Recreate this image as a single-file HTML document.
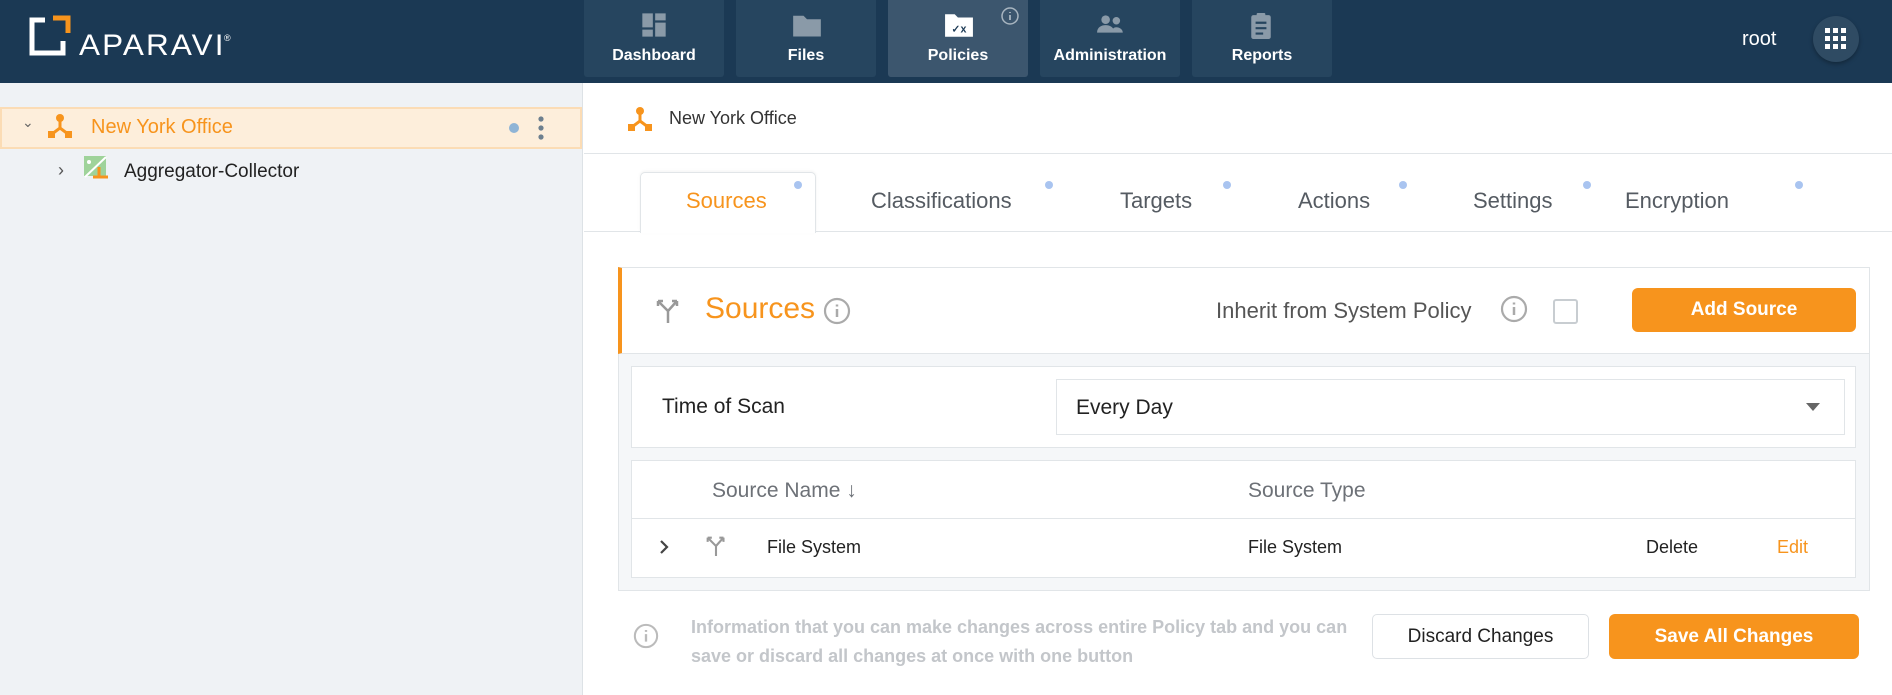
<!DOCTYPE html>
<html><head><meta charset="utf-8"><style>
*{box-sizing:border-box;margin:0;padding:0}
body{width:1892px;height:695px;overflow:hidden;font-family:"Liberation Sans",sans-serif;background:#fff;position:relative}
.abs{position:absolute}
.hdr{left:0;top:0;width:1892px;height:83px;background:#1b3954}
.nav{top:0;width:140px;height:77px;background:#26455f;color:#fff;font-size:16px;font-weight:bold;text-align:center;border-radius:0 0 3px 3px}
.nav span{position:absolute;left:0;right:0;top:47px}
.nav svg{position:absolute;left:56px;top:11px}
.side{left:0;top:83px;width:583px;height:612px;background:#eff2f5;border-right:1px solid #dde2e6}
.t{position:absolute;white-space:nowrap}
.tab{font-size:22px;color:#555b62;top:188px}
.dot{width:8px;height:8px;border-radius:50%;background:#a9c4f0;top:181px}
</style></head><body>
<div class="abs hdr"></div>
<!-- logo -->
<svg class="abs" style="left:29px;top:15px" width="44" height="42" viewBox="0 0 44 42"><path d="M16 5 H3 V38 H34 V26" stroke="#fff" stroke-width="5" fill="none"/><path d="M24 3 H39 V18" stroke="#f7941d" stroke-width="5" fill="none"/></svg>
<div class="t" style="left:79px;top:29px;font-size:30px;color:#fff;letter-spacing:2px;transform:scaleX(1.05);transform-origin:left">APARAVI</div>
<div class="t" style="left:224px;top:33px;font-size:9px;color:#fff">®</div>
<div class="abs nav" style="left:584px"><svg width="28" height="28" viewBox="0 0 24 24"><path fill="#8a9aa8" d="M2 2h9v12H2zM13 2h9v6h-9zM13 10h9v12h-9zM2 16h9v6H2z"/></svg><span>Dashboard</span></div>
<div class="abs nav" style="left:736px"><svg width="30" height="28" viewBox="0 0 26 24"><path fill="#8a9aa8" d="M1 4h9l3 3h12v15H1z"/></svg><span>Files</span></div>
<div class="abs nav" style="left:888px;background:#3c566e"><svg width="30" height="28" viewBox="0 0 28 24"><path fill="#fff" d="M1 2h9l3 3h14v18H1z"/><text x="7" y="19" font-size="10" font-weight="bold" fill="#1b3954" font-family="Liberation Sans">✓x</text></svg><span>Policies</span>
<svg style="left:112px;top:6px" width="20" height="20" viewBox="0 0 20 20"><circle cx="10" cy="10" r="8" stroke="#a8b5c0" stroke-width="1.5" fill="none"/><path d="M10 9v5M10 6v1" stroke="#a8b5c0" stroke-width="1.8"/></svg></div>
<div class="abs nav" style="left:1040px"><svg width="30" height="26" viewBox="0 0 28 24"><circle cx="9" cy="8" r="4" fill="#8a9aa8"/><circle cx="19" cy="9" r="3.5" fill="#8a9aa8"/><path fill="#8a9aa8" d="M1 20c0-5 4-7 8-7s8 2 8 7zM15 20c0-3 1-5 4-5s6 2 6 5z"/></svg><span>Administration</span></div>
<div class="abs nav" style="left:1192px"><svg width="26" height="30" viewBox="0 0 24 26"><rect x="3" y="3" width="18" height="22" rx="2" fill="#8a9aa8"/><rect x="8" y="1" width="8" height="4" rx="1" fill="#8a9aa8"/><path d="M7 10h10M7 15h10M7 20h7" stroke="#26455f" stroke-width="2"/></svg><span>Reports</span></div>
<div class="t" style="left:1742px;top:28px;font-size:20px;color:#fff">root</div>
<div class="abs" style="left:1813px;top:16px;width:46px;height:46px;border-radius:50%;background:#2f4b63;box-shadow:0 2px 4px rgba(0,0,0,.3)"></div>
<svg class="abs" style="left:1825px;top:28px" width="22" height="22" viewBox="0 0 22 22" fill="#fff"><rect x="0" y="0" width="5" height="5"/><rect x="8" y="0" width="5" height="5"/><rect x="16" y="0" width="5" height="5"/><rect x="0" y="8" width="5" height="5"/><rect x="8" y="8" width="5" height="5"/><rect x="16" y="8" width="5" height="5"/><rect x="0" y="16" width="5" height="5"/><rect x="8" y="16" width="5" height="5"/><rect x="16" y="16" width="5" height="5"/></svg>
<!-- sidebar -->
<div class="abs side"></div>
<div class="abs" style="left:0;top:107px;width:582px;height:42px;background:#fdeedb;border:2px solid #fbdcb5"></div>
<div class="t" style="left:22px;top:114px;font-size:14px;color:#666">⌄</div>
<svg class="abs" style="left:48px;top:113px" width="24" height="26" viewBox="0 0 24 26"><circle cx="12" cy="5" r="4" fill="#f7941d"/><path d="M12 8v7L4 21M12 15l8 6" stroke="#f7941d" stroke-width="3" fill="none"/><rect x="0" y="18" width="7" height="7" fill="#f7941d"/><rect x="17" y="18" width="7" height="7" fill="#f7941d"/></svg>
<div class="t" style="left:91px;top:116px;font-size:20px;color:#f7941d">New York Office</div>
<div class="abs" style="left:509px;top:123px;width:10px;height:10px;border-radius:50%;background:#8fb4d6"></div>
<svg class="abs" style="left:538px;top:116px" width="6" height="24"><circle cx="3" cy="3" r="2.6" fill="#6d7f8e"/><circle cx="3" cy="12" r="2.6" fill="#6d7f8e"/><circle cx="3" cy="21" r="2.6" fill="#6d7f8e"/></svg>
<div class="t" style="left:58px;top:160px;font-size:18px;color:#555">›</div>
<svg class="abs" style="left:83px;top:155px" width="26" height="24" viewBox="0 0 26 24"><rect x="1" y="1" width="22" height="20" fill="#9fd39a"/><path d="M2 22L23 2" stroke="#fff" stroke-width="2"/><path d="M10 22h15M16 12v10" stroke="#f7941d" stroke-width="3"/><circle cx="6" cy="7" r="2" fill="#fff"/></svg>
<div class="t" style="left:124px;top:161px;font-size:19px;color:#222">Aggregator-Collector</div>
<!-- breadcrumb -->
<svg class="abs" style="left:628px;top:106px" width="24" height="26" viewBox="0 0 24 26"><circle cx="12" cy="5" r="4" fill="#f7941d"/><path d="M12 8v7L4 21M12 15l8 6" stroke="#f7941d" stroke-width="3" fill="none"/><rect x="0" y="18" width="7" height="7" fill="#f7941d"/><rect x="17" y="18" width="7" height="7" fill="#f7941d"/></svg>
<div class="t" style="left:669px;top:108px;font-size:18px;color:#333">New York Office</div>
<div class="abs" style="left:584px;top:153px;width:1308px;height:1px;background:#e1e5e8"></div>
<!-- tabs -->
<div class="abs" style="left:584px;top:231px;width:1308px;height:1px;background:#e1e5e8"></div>
<div class="abs" style="left:640px;top:172px;width:176px;height:61px;background:#fff;border:1px solid #e1e5e8;border-bottom:none;border-radius:5px 5px 0 0;box-shadow:0 -1px 3px rgba(0,0,0,.05)"></div>
<div class="t tab" style="left:686px;color:#f7941d">Sources</div>
<div class="t tab" style="left:871px">Classifications</div>
<div class="t tab" style="left:1120px">Targets</div>
<div class="t tab" style="left:1298px">Actions</div>
<div class="t tab" style="left:1473px">Settings</div>
<div class="t tab" style="left:1625px">Encryption</div>
<div class="abs dot" style="left:794px"></div><div class="abs dot" style="left:1045px"></div><div class="abs dot" style="left:1223px"></div><div class="abs dot" style="left:1399px"></div><div class="abs dot" style="left:1583px"></div><div class="abs dot" style="left:1795px"></div>
<!-- panel -->
<div class="abs" style="left:618px;top:267px;width:1252px;height:324px;background:#f5f7f9;border:1px solid #e1e5e8"></div>
<div class="abs" style="left:618px;top:267px;width:1252px;height:87px;background:#fff;border:1px solid #e1e5e8;border-left:4px solid #f7941d"></div>
<svg class="abs" style="left:656px;top:298px" width="24" height="26" viewBox="0 0 24 26" stroke="#999" stroke-width="2.5" fill="none"><path d="M12 25V13L3 4M12 13l8-9M2 3v5M2 3h5M21 3v5M21 3h-5"/></svg>
<div class="t" style="left:705px;top:292px;font-size:30px;color:#f7941d">Sources</div>
<svg class="abs" style="left:823px;top:297px" width="28" height="28" viewBox="0 0 28 28"><circle cx="14" cy="14" r="12" stroke="#aaa" stroke-width="2.2" fill="none"/><path d="M14 12v8M14 7.5v2" stroke="#aaa" stroke-width="2.5"/></svg>
<div class="t" style="left:1216px;top:298px;font-size:22px;color:#555">Inherit from System Policy</div>
<svg class="abs" style="left:1500px;top:295px" width="28" height="28" viewBox="0 0 28 28"><circle cx="14" cy="14" r="12" stroke="#aaa" stroke-width="2.2" fill="none"/><path d="M14 12v8M14 7.5v2" stroke="#aaa" stroke-width="2.5"/></svg>
<div class="abs" style="left:1553px;top:299px;width:25px;height:25px;border:2px solid #c8cdd1;border-radius:3px"></div>
<div class="abs" style="left:1632px;top:288px;width:224px;height:44px;background:#f7941d;border-radius:6px;color:#fff;font-weight:bold;font-size:19px;text-align:center;line-height:44px">Add Source</div>
<div class="abs" style="left:631px;top:366px;width:1225px;height:82px;background:#fff;border:1px solid #e1e5e8"></div>
<div class="t" style="left:662px;top:395px;font-size:21px;color:#222">Time of Scan</div>
<div class="abs" style="left:1056px;top:379px;width:789px;height:56px;border:1px solid #e1e5e8"></div>
<div class="t" style="left:1076px;top:396px;font-size:21px;color:#222">Every Day</div>
<svg class="abs" style="left:1806px;top:403px" width="14" height="8"><path d="M0 0h14L7 8z" fill="#666"/></svg>
<div class="abs" style="left:631px;top:460px;width:1225px;height:118px;background:#fff;border:1px solid #e1e5e8"></div>
<div class="abs" style="left:631px;top:518px;width:1225px;height:1px;background:#e1e5e8"></div>
<div class="t" style="left:712px;top:479px;font-size:21px;color:#6d7177">Source Name ↓</div>
<div class="t" style="left:1248px;top:479px;font-size:21px;color:#6d7177">Source Type</div>
<svg class="abs" style="left:659px;top:539px" width="10" height="16"><path d="M2 2l6 6-6 6" stroke="#444" stroke-width="2.2" fill="none"/></svg>
<svg class="abs" style="left:706px;top:534px" width="20" height="24" viewBox="0 0 24 26" stroke="#999" stroke-width="2.5" fill="none"><path d="M12 25V13L3 4M12 13l8-9M2 3v5M2 3h5M21 3v5M21 3h-5"/></svg>
<div class="t" style="left:767px;top:537px;font-size:18px;color:#222">File System</div>
<div class="t" style="left:1248px;top:537px;font-size:18px;color:#222">File System</div>
<div class="t" style="left:1646px;top:537px;font-size:18px;color:#222">Delete</div>
<div class="t" style="left:1777px;top:537px;font-size:18px;color:#f7941d">Edit</div>
<!-- footer -->
<svg class="abs" style="left:633px;top:623px" width="26" height="26" viewBox="0 0 28 28"><circle cx="14" cy="14" r="12" stroke="#bbb" stroke-width="2.2" fill="none"/><path d="M14 12v8M14 7.5v2" stroke="#bbb" stroke-width="2.5"/></svg>
<div class="t" style="left:691px;top:613px;font-size:18px;font-weight:bold;color:#c3c6ca;line-height:29px">Information that you can make changes across entire Policy tab and you can<br>save or discard all changes at once with one button</div>
<div class="abs" style="left:1372px;top:614px;width:217px;height:45px;border:1px solid #dde1e5;border-radius:5px;font-size:19px;color:#222;text-align:center;line-height:43px">Discard Changes</div>
<div class="abs" style="left:1609px;top:614px;width:250px;height:45px;background:#f7941d;border-radius:6px;color:#fff;font-weight:bold;font-size:19px;text-align:center;line-height:45px">Save All Changes</div>
</body></html>
